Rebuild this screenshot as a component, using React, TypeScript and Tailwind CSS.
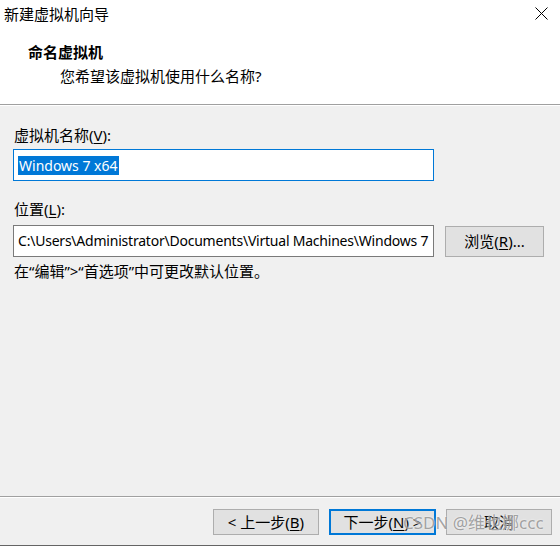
const font = "font-['Noto_Sans','Noto_Sans_CJK_SC',sans-serif]"

// small helper: mnemonic letter with underline
const Key = ({ k }: { k: string }) => <span className="underline underline-offset-2">{k}</span>

const WizardButton = ({
  children,
  focused,
}: {
  children: React.ReactNode
  focused?: boolean
}) => (
  <div
    className={
      focused
        ? 'w-[107px] h-[26px] flex items-center justify-center bg-[#e1e1e1] border-2 border-[#0078d7] text-[15px] text-black'
        : 'w-[106px] h-[26px] flex items-center justify-center bg-[#e1e1e1] border border-[#adadad] text-[15px] text-black'
    }
  >
    {children}
  </div>
)

const App = () => {
  return (
    <div className={`${font} relative w-[560px] h-[546px] flex flex-col bg-[#f0f0f0] overflow-hidden`}>
      {/* header */}
      <div className="bg-white h-[105px] border-b border-[#a0a0a0] flex flex-col">
        <div className="h-[28px] flex items-center justify-between pl-[4px] pr-[12px]">
          <span className="text-[15px] text-black leading-none">新建虚拟机向导</span>
          <svg width="13" height="13" viewBox="0 0 13 13" className="mb-[1px]">
            <path d="M0.5 0.5 L12.5 12.5 M12.5 0.5 L0.5 12.5" stroke="#000" strokeWidth="1" fill="none" />
          </svg>
        </div>
        <div className="pl-[28px] mt-[13px] text-[15px] font-bold text-black leading-[22px]">命名虚拟机</div>
        <div className="pl-[60px] mt-[2px] text-[15px] text-black leading-[22px]">您希望该虚拟机使用什么名称?</div>
      </div>
      <div className="h-px bg-white" />

      {/* body */}
      <div className="flex-1 flex flex-col pl-[13px] pt-[18px]">
        <div className="text-[15px] text-black leading-[22px] pl-px">
          虚拟机名称(<Key k="V" />):
        </div>
        <div className="mt-[3px] w-[421px] h-[32px] bg-white border border-[#0078d7] flex items-center pl-[4px]">
          <span className="bg-[#0078d7] text-white text-[14px] leading-[19px] px-px">Windows 7 x64</span>
        </div>

        <div className="mt-[17px] text-[15px] text-black leading-[22px] pl-px">
          位置(<Key k="L" />):
        </div>
        <div className="mt-[5px] flex items-center gap-[11px]">
          <div className="w-[421px] h-[32px] bg-white border border-[#7a7a7a] flex items-center pl-[4px] overflow-hidden whitespace-nowrap">
            <span className="text-[14px] tracking-[-0.22px] text-black leading-none">
              C:\Users\Administrator\Documents\Virtual Machines\Windows 7
            </span>
          </div>
          <div className="w-[99px] h-[31px] bg-[#e1e1e1] border border-[#adadad] flex items-center justify-center text-[15px] text-black">
            浏览(<Key k="R" />)...
          </div>
        </div>
        <div className="mt-[3px] text-[15px] text-black leading-[22px] pl-px">
          在“编辑”&gt;“首选项”中可更改默认位置。
        </div>
      </div>

      {/* footer */}
      <div className="h-px bg-[#a0a0a0]" />
      <div className="h-px bg-white" />
      <div className="h-[47px] flex items-start justify-end pt-[11px] pr-[8px] gap-[10px]">
        <WizardButton>
          &lt; 上一步(<Key k="B" />)
        </WizardButton>
        <WizardButton focused>
          下一步(<Key k="N" />) &gt;
        </WizardButton>
        <WizardButton>取消</WizardButton>
      </div>
      <div className="h-px bg-[#646464]" />

      {/* watermark */}
      <div className="absolute left-[403px] top-[510px] text-[17px] leading-[26px] text-[#8c8c8c]/80 whitespace-nowrap [text-shadow:0_0_2px_#fff]">
        CSDN @维也娜ccc
      </div>
    </div>
  )
}

export default App
